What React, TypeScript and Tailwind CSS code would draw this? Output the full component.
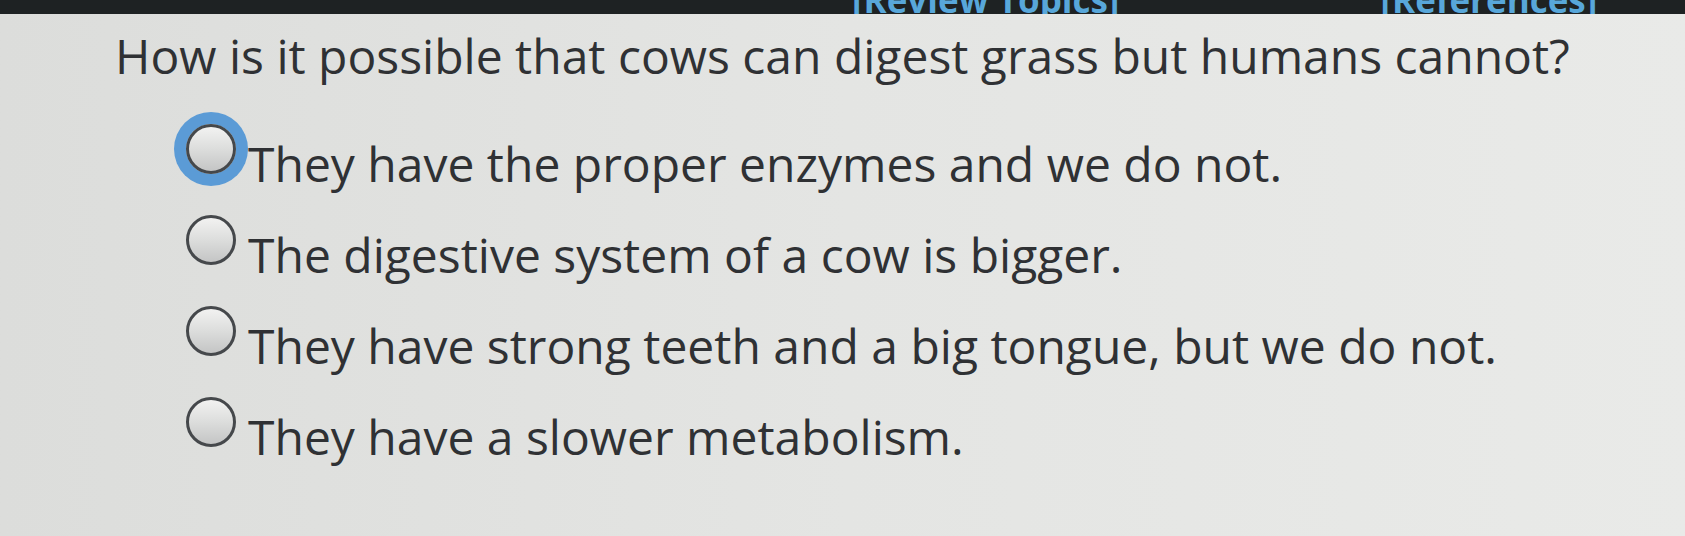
import React from "react";

const options = [
  "They have the proper enzymes and we do not.",
  "The digestive system of a cow is bigger.",
  "They have strong teeth and a big tongue, but we do not.",
  "They have a slower metabolism.",
];

function Radio({ selected }: { selected: boolean }) {
  return (
    <div
      className={
        "mb-[30px] h-[50px] w-[50px] shrink-0 rounded-full border-[3px] border-[#45484b] bg-linear-to-b from-[#f2f2f1] via-[#dcdddc] to-[#c4c5c5] " +
        (selected ? "ring-[12px] ring-[#5b9bd6]" : "")
      }
    />
  );
}

export default function App() {
  return (
    <div
      className="h-[536px] w-[1685px] overflow-hidden bg-linear-to-r from-[#dcdddb] via-[#e4e5e3] to-[#e9eae8] text-[#2f3134]"
      style={{ fontFamily: '"Open Sans", "Noto Sans", sans-serif' }}
    >
      <div className="flex h-[14px] items-end overflow-hidden bg-[#1e2223]">
        <div className="-mb-[3px] ml-[852px] text-[35px] font-bold leading-[35px] text-[#58a7da]">
          [Review Topics]
        </div>
        <div className="-mb-[3px] ml-[261px] text-[35px] font-bold leading-[35px] text-[#58a7da]">
          [References]
        </div>
      </div>
      <div className="pl-[115px] pt-[13px]">
        <h1 className="text-[48px] font-normal leading-[58px]">
          How is it possible that cows can digest grass but humans cannot?
        </h1>
      </div>
      <div className="mt-[33px] flex flex-col pl-[186px]">
        {options.map((o, i) => (
          <div key={i} className="flex h-[91px] items-center gap-[12px]">
            <Radio selected={i === 0} />
            <span className="text-[48px] leading-[58px]">{o}</span>
          </div>
        ))}
      </div>
    </div>
  );
}
